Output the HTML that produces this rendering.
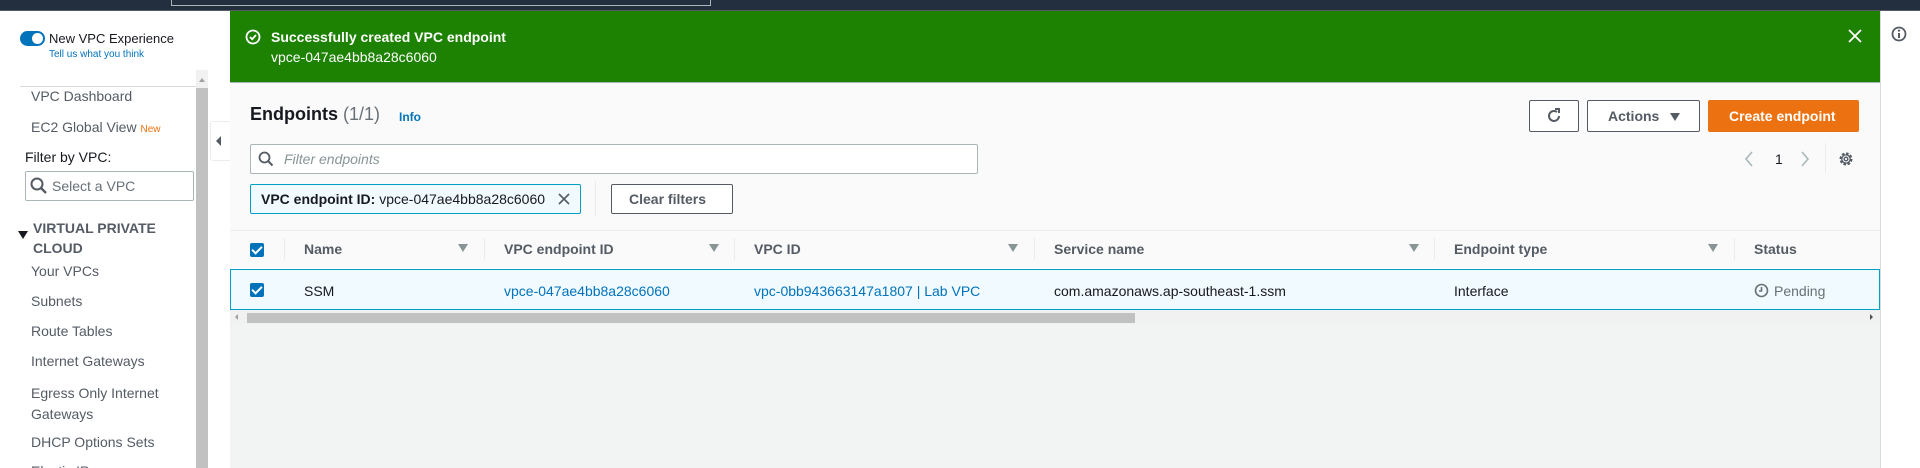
<!DOCTYPE html>
<html><head><style>
*{box-sizing:border-box;margin:0;padding:0}
html,body{width:1920px;height:468px;overflow:hidden}
body{background:#f2f3f3;font-family:"Liberation Sans",sans-serif;color:#16191f;position:relative;font-size:14px}
.a{position:absolute}
.top{left:0;top:0;width:1920px;height:11px;background:#232f3e;border-bottom:1px solid #545b64}
.side{left:0;top:11px;width:230px;height:457px;background:#fff}
.si{position:absolute;left:31px;font-size:14px;color:#545b64}
.hd{font-weight:bold;font-size:14px;color:#16191f}
.th{position:absolute;top:241px;font-weight:bold;font-size:14px;color:#545b64}
.td{position:absolute;top:283px;font-size:14px}
.tri{position:absolute;top:244px;width:0;height:0;border-left:5px solid transparent;border-right:5px solid transparent;border-top:8px solid #879596}
.dv{position:absolute;top:238px;width:1px;height:22px;background:#eaeded}
.cb{position:absolute;left:250px;width:14px;height:14px;background:#0073bb;border-radius:2px}
.cb:after{content:"";position:absolute;left:4px;top:1px;width:4px;height:8px;border:solid #fff;border-width:0 2px 2px 0;transform:rotate(45deg)}
.link{color:#0073bb}
</style></head><body>
<div class="a top"></div>
<div class="a" style="left:171px;top:0;width:540px;height:6px;border:1px solid #aab7b8;border-top:none"></div>
<div class="a side"></div>
<div class="a" style="left:20px;top:31px;width:25px;height:15px;border-radius:8px;background:#0073bb"></div>
<div class="a" style="left:32px;top:33px;width:11px;height:11px;border-radius:6px;background:#fff"></div>
<div class="a" style="left:49px;top:31px;font-size:13px;color:#16191f">New VPC Experience</div>
<div class="a" style="left:49px;top:49px;font-size:10px;color:#0073bb">Tell us what you think</div>
<div class="a" style="left:20px;top:86px;width:176px;height:1px;background:#d5dbdb"></div>
<div class="a" style="left:196px;top:88px;width:12px;height:380px;background:#c1c1c1"></div>
<div class="a" style="left:196px;top:70px;width:12px;height:18px;background:#f1f1f1"></div>
<div class="a" style="left:199px;top:78px;border-left:3px solid transparent;border-right:3px solid transparent;border-bottom:4px solid #a0a0a0"></div>
<div class="si" style="top:88px">VPC Dashboard</div>
<div class="si" style="top:119px">EC2 Global View <span style="color:#ec7211;font-size:10px">New</span></div>
<div class="si" style="top:149px;left:25px;color:#16191f">Filter by VPC:</div>
<div class="a" style="left:25px;top:171px;width:169px;height:30px;border:1px solid #aab7b8;border-radius:2px;background:#fff"></div>
<svg class="a" style="left:30px;top:177px" width="18" height="18"><circle cx="7" cy="7" r="5.5" fill="none" stroke="#545b64" stroke-width="2"/><path d="M11 11l5 5" stroke="#545b64" stroke-width="2.4"/></svg>
<div class="a" style="left:52px;top:178px;font-size:14px;color:#687078">Select a VPC</div>
<div class="a" style="left:18px;top:231px;border-left:5px solid transparent;border-right:5px solid transparent;border-top:8px solid #16191f"></div>
<div class="a hd" style="left:33px;top:218px;line-height:20px;color:#545b64">VIRTUAL PRIVATE<br>CLOUD</div>
<div class="si" style="top:263px">Your VPCs</div>
<div class="si" style="top:293px">Subnets</div>
<div class="si" style="top:323px">Route Tables</div>
<div class="si" style="top:353px">Internet Gateways</div>
<div class="si" style="top:383px;line-height:21px">Egress Only Internet<br>Gateways</div>
<div class="si" style="top:434px">DHCP Options Sets</div>
<div class="si" style="top:463px">Elastic IPs</div>
<div class="a" style="left:210px;top:121px;width:20px;height:40px;background:#fff;border:1px solid #eaeded;border-right:none;border-radius:3px 0 0 3px"></div>
<div class="a" style="left:216px;top:136px;border-top:5px solid transparent;border-bottom:5px solid transparent;border-right:5px solid #545b64"></div>

<div class="a" style="left:230px;top:11px;width:1650px;height:71px;background:#1d8102"></div>
<svg class="a" style="left:245px;top:29px" width="16" height="16"><circle cx="8" cy="8" r="6.5" fill="none" stroke="#fff" stroke-width="1.8"/><path d="M5 8l2.2 2.2L11 6" fill="none" stroke="#fff" stroke-width="1.8"/></svg>
<div class="a" style="left:271px;top:29px;font-weight:bold;font-size:14px;color:#fff">Successfully created VPC endpoint</div>
<div class="a" style="left:271px;top:49px;font-size:14px;color:#fff">vpce-047ae4bb8a28c6060</div>
<svg class="a" style="left:1848px;top:29px" width="14" height="14"><path d="M1 1l12 12M13 1L1 13" stroke="#fff" stroke-width="1.8"/></svg>

<div class="a" style="left:230px;top:82px;width:1650px;height:228px;background:#fafafa"></div>
<div class="a" style="left:230px;top:82px;width:1650px;height:1px;background:#aab7b8"></div>
<div class="a" style="left:250px;top:104px;font-size:18px;font-weight:bold">Endpoints <span style="font-weight:normal;color:#687078">(1/1)</span></div>
<div class="a" style="left:399px;top:110px;font-size:12px;font-weight:bold;color:#0073bb">Info</div>
<div class="a" style="left:1529px;top:100px;width:50px;height:32px;border:1px solid #545b64;border-radius:2px;background:#fff"></div>
<svg class="a" style="left:1545px;top:107px" width="18" height="18"><path d="M14 9a5 5 0 1 1-2-4" fill="none" stroke="#545b64" stroke-width="2"/><path d="M10 2h4v4" fill="none" stroke="#545b64" stroke-width="2"/></svg>
<div class="a" style="left:1587px;top:100px;width:113px;height:32px;border:1px solid #545b64;border-radius:2px;background:#fff"></div>
<div class="a" style="left:1608px;top:108px;font-weight:bold;color:#545b64">Actions</div>
<div class="a" style="left:1670px;top:113px;border-left:5px solid transparent;border-right:5px solid transparent;border-top:8px solid #545b64"></div>
<div class="a" style="left:1708px;top:100px;width:151px;height:32px;background:#ec7211;border-radius:2px"></div>
<div class="a" style="left:1729px;top:108px;font-weight:bold;color:#fff">Create endpoint</div>

<div class="a" style="left:250px;top:144px;width:728px;height:30px;border:1px solid #aab7b8;border-radius:2px;background:#fff"></div>
<svg class="a" style="left:258px;top:151px" width="16" height="16"><circle cx="6.5" cy="6.5" r="5" fill="none" stroke="#545b64" stroke-width="1.8"/><path d="M10 10l4.5 4.5" stroke="#545b64" stroke-width="2"/></svg>
<div class="a" style="left:284px;top:151px;font-style:italic;color:#879596">Filter endpoints</div>
<svg class="a" style="left:1743px;top:150px" width="12" height="18"><path d="M9 2L3 9l6 7" fill="none" stroke="#aab7b8" stroke-width="1.6"/></svg>
<div class="a" style="left:1775px;top:151px;font-size:14px">1</div>
<svg class="a" style="left:1799px;top:150px" width="12" height="18"><path d="M3 2l6 7-6 7" fill="none" stroke="#aab7b8" stroke-width="1.6"/></svg>
<div class="a" style="left:1825px;top:143px;width:1px;height:30px;background:#eaeded"></div>
<svg class="a" style="left:1838px;top:151px" width="16" height="16"><circle cx="8" cy="8" r="5" fill="none" stroke="#545b64" stroke-width="3" stroke-dasharray="2.4 1.5"/><circle cx="8" cy="8" r="4.2" fill="none" stroke="#545b64" stroke-width="1.2"/><circle cx="8" cy="8" r="1.8" fill="none" stroke="#545b64" stroke-width="1.4"/></svg>

<div class="a" style="left:250px;top:184px;width:331px;height:30px;border:1px solid #00a1c9;border-radius:2px;background:#f1faff"></div>
<div class="a" style="left:261px;top:191px;font-size:14px"><b>VPC endpoint ID:</b> vpce-047ae4bb8a28c6060</div>
<svg class="a" style="left:558px;top:193px" width="12" height="12"><path d="M1 1l10 10M11 1L1 11" stroke="#545b64" stroke-width="1.6"/></svg>
<div class="a" style="left:595px;top:181px;width:1px;height:35px;background:#eaeded"></div>
<div class="a" style="left:611px;top:184px;width:122px;height:30px;border:1px solid #545b64;border-radius:2px;background:#fff"></div>
<div class="a" style="left:629px;top:191px;font-weight:bold;color:#545b64">Clear filters</div>

<div class="a" style="left:230px;top:230px;width:1650px;height:1px;background:#eaeded"></div>
<div class="cb" style="top:243px;left:250px"></div>
<div class="dv" style="left:284px"></div>
<div class="th" style="left:304px">Name</div><div class="tri" style="left:458px"></div><div class="dv" style="left:484px"></div>
<div class="th" style="left:504px">VPC endpoint ID</div><div class="tri" style="left:709px"></div><div class="dv" style="left:734px"></div>
<div class="th" style="left:754px">VPC ID</div><div class="tri" style="left:1008px"></div><div class="dv" style="left:1034px"></div>
<div class="th" style="left:1054px">Service name</div><div class="tri" style="left:1409px"></div><div class="dv" style="left:1434px"></div>
<div class="th" style="left:1454px">Endpoint type</div><div class="tri" style="left:1708px"></div><div class="dv" style="left:1734px"></div>
<div class="th" style="left:1754px">Status</div>

<div class="a" style="left:230px;top:269px;width:1650px;height:41px;background:#f1faff;border:1px solid #00a1c9"></div>
<div class="cb" style="top:283px"></div>
<div class="td" style="left:304px">SSM</div>
<div class="td link" style="left:504px">vpce-047ae4bb8a28c6060</div>
<div class="td link" style="left:754px">vpc-0bb943663147a1807 | Lab VPC</div>
<div class="td" style="left:1054px">com.amazonaws.ap-southeast-1.ssm</div>
<div class="td" style="left:1454px">Interface</div>
<svg class="a" style="left:1754px;top:283px" width="15" height="15"><circle cx="7.5" cy="7.5" r="6" fill="none" stroke="#687078" stroke-width="1.6"/><path d="M7.5 4v4H5" fill="none" stroke="#687078" stroke-width="1.6"/></svg>
<div class="td" style="left:1774px;color:#687078">Pending</div>
<div class="a" style="left:230px;top:310px;width:1650px;height:14px;background:#f1f1f1"></div>
<div class="a" style="left:247px;top:313px;width:888px;height:10px;background:#c1c1c1"></div>
<div class="a" style="left:235px;top:314px;border-top:3px solid transparent;border-bottom:3px solid transparent;border-right:3px solid #a0a0a0"></div>
<div class="a" style="left:1870px;top:314px;border-top:3px solid transparent;border-bottom:3px solid transparent;border-left:3px solid #505050"></div>

<div class="a" style="left:1880px;top:11px;width:40px;height:457px;background:#fff;border-left:1px solid #d5dbdb"></div>
<svg class="a" style="left:1891px;top:26px" width="16" height="16"><circle cx="8" cy="8" r="6.5" fill="none" stroke="#545b64" stroke-width="1.8"/><path d="M8 7v5" stroke="#545b64" stroke-width="2"/><circle cx="8" cy="4.6" r="1.1" fill="#545b64"/></svg>
</body></html>
